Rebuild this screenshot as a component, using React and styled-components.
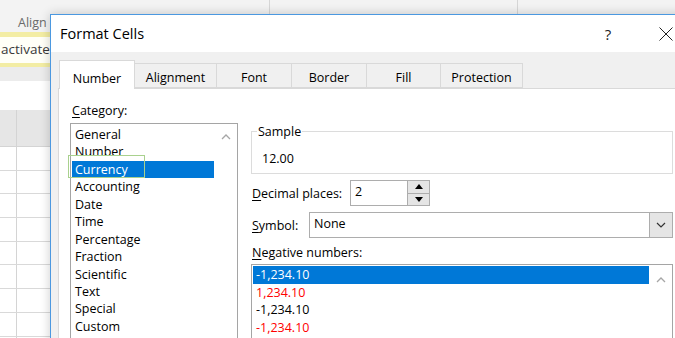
import styled, { createGlobalStyle } from 'styled-components';

const GlobalStyle = createGlobalStyle`
  html, body {
    margin: 0;
    padding: 0;
    background: #fff;
  }
  body {
    font-family: "Open Sans", "Noto Sans", sans-serif;
    font-size: 12.5px;
    color: #000;
  }
  * {
    box-sizing: border-box;
  }
`;

const tabs = [
  { label: 'Number', width: 76, active: true },
  { label: 'Alignment', width: 83 },
  { label: 'Font', width: 76 },
  { label: 'Border', width: 76 },
  { label: 'Fill', width: 75 },
  { label: 'Protection', width: 83 },
];

const categories = [
  'General', 'Number', 'Currency', 'Accounting', 'Date', 'Time',
  'Percentage', 'Fraction', 'Scientific', 'Text', 'Special', 'Custom',
];

const negatives = [
  { text: '-1,234.10', red: false },
  { text: '1,234.10', red: true },
  { text: '-1,234.10', red: false },
  { text: '-1,234.10', red: true },
];

const sheetRows = Array.from({ length: 9 });

const ChevronUp = () => (
  <svg width="10" height="7" viewBox="0 0 10 7">
    <polyline points="1,6 5,2 9,6" fill="none" stroke="#a6a6a6" strokeWidth="1.3" />
  </svg>
);

const ChevronDown = () => (
  <svg width="10" height="6" viewBox="0 0 10 6">
    <polyline points="1,1 5,5 9,1" fill="none" stroke="#333" strokeWidth="1.2" />
  </svg>
);

const CloseIcon = () => (
  <svg width="14" height="14" viewBox="0 0 14 14">
    <line x1="0.5" y1="0.5" x2="13.5" y2="13.5" stroke="#222" strokeWidth="1" />
    <line x1="13.5" y1="0.5" x2="0.5" y2="13.5" stroke="#222" strokeWidth="1" />
  </svg>
);

const Triangle = ({ down }) => (
  <svg width="8" height="5" viewBox="0 0 8 5">
    <polygon points={down ? '0,0 8,0 4,5' : '0,5 8,5 4,0'} fill="#000" />
  </svg>
);

const App = () => {
  return (
    <>
      <GlobalStyle />
      <Screen>
        <Sheet>
          <RibbonTop>
            <RibbonGroup $w={270} />
            <RibbonGroup $w={248} />
          </RibbonTop>
          <RibbonLabels>Align</RibbonLabels>
          <MessageBar>activate</MessageBar>
          <FormulaBand />
          <BlankBand />
          <HeaderBand>
            <RowHead />
          </HeaderBand>
          {sheetRows.map((_, i) => (
            <SheetRow key={i}>
              <RowHead />
            </SheetRow>
          ))}
        </Sheet>

        <Dialog>
          <TitleBar>
            <Title>Format Cells</Title>
            <TitleButtons>
              <TitleButton>?</TitleButton>
              <TitleButton>
                <CloseIcon />
              </TitleButton>
            </TitleButtons>
          </TitleBar>

          <Body>
            <TabStrip>
              {tabs.map(t => (
                <Tab key={t.label} $active={t.active} $w={t.width}>
                  {t.label}
                </Tab>
              ))}
            </TabStrip>

            <Panel>
              <Column>
                <FieldLabel>
                  <u>C</u>ategory:
                </FieldLabel>
                <CategoryList>
                  <Items $top={2}>
                    {categories.map(c => (
                      <Item key={c} $h={17.45} $selected={c === 'Currency'}>
                        {c}
                      </Item>
                    ))}
                  </Items>
                  <ScrollTrack $top={9}>
                    <ChevronUp />
                  </ScrollTrack>
                  <FocusMark />
                </CategoryList>
              </Column>

              <Column>
                <SampleBox>
                  <SampleLegend>Sample</SampleLegend>
                  <SampleValue>12.00</SampleValue>
                </SampleBox>

                <FormRow>
                  <FieldLabel $w={99}>
                    <u>D</u>ecimal places:
                  </FieldLabel>
                  <SpinInput>
                    <InputValue>2</InputValue>
                    <SpinButtons>
                      <SpinHalf>
                        <Triangle />
                      </SpinHalf>
                      <SpinHalf $lower>
                        <Triangle down />
                      </SpinHalf>
                    </SpinButtons>
                  </SpinInput>
                </FormRow>

                <FormRow>
                  <FieldLabel $w={58}>
                    <u>S</u>ymbol:
                  </FieldLabel>
                  <Select>
                    <InputValue>None</InputValue>
                    <DropButton>
                      <ChevronDown />
                    </DropButton>
                  </Select>
                </FormRow>

                <FieldLabel $gap={6}>
                  <u>N</u>egative numbers:
                </FieldLabel>
                <NegativeList>
                  <Items $top={1}>
                    {negatives.map((n, i) => (
                      <Item key={i} $h={17.7} $selected={i === 0} $red={n.red}>
                        {n.text}
                      </Item>
                    ))}
                  </Items>
                  <ScrollTrack $top={11}>
                    <ChevronUp />
                  </ScrollTrack>
                </NegativeList>
              </Column>
            </Panel>
          </Body>
        </Dialog>
      </Screen>
    </>
  );
};

const Screen = styled.div`
  position: relative;
  width: 675px;
  height: 338px;
  overflow: hidden;
  background: #fff;
`;

/* Excel window behind the dialog */
const Sheet = styled.div`
  display: flex;
  flex-direction: column;
  height: 100%;
`;

const RibbonTop = styled.div`
  display: flex;
  height: 14px;
  background: #f3f3f3;
  flex-shrink: 0;
`;

const RibbonGroup = styled.div`
  width: ${p => p.$w}px;
  border-right: 1px solid #d6d6d6;
`;

const RibbonLabels = styled.div`
  height: 18px;
  flex-shrink: 0;
  background: #f3f3f3;
  padding-left: 18px;
  line-height: 17px;
  font-size: 12.5px;
  color: #6a6a6a;
`;

const MessageBar = styled.div`
  height: 35px;
  flex-shrink: 0;
  background: #fffff7;
  border-top: 5px solid #f3eda3;
  border-bottom: 4px solid #f3eda3;
  padding-left: 1px;
  line-height: 25px;
  font-size: 13.5px;
  color: #3a3a3a;
`;

const FormulaBand = styled.div`
  height: 14px;
  flex-shrink: 0;
  background: #ececec;
`;

const BlankBand = styled.div`
  height: 29px;
  flex-shrink: 0;
  background: #fff;
`;

const HeaderBand = styled.div`
  height: 37px;
  flex-shrink: 0;
  display: flex;
  background: #e6e6e6;
  border-bottom: 1px solid #d4d4d4;
`;

const SheetRow = styled.div`
  height: 23.7px;
  flex-shrink: 0;
  display: flex;
  border-bottom: 1px solid #d9d9d9;
`;

const RowHead = styled.div`
  width: 17px;
  border-right: 1px solid #d4d4d4;
`;

/* Dialog window */
const Dialog = styled.div`
  position: absolute;
  left: 50px;
  top: 14px;
  width: 640px;
  height: 340px;
  display: flex;
  flex-direction: column;
  background: #f0f0f0;
  border: 1px solid #4b98e0;
  box-shadow: 0 0 10px rgba(0, 0, 0, 0.2);
`;

const TitleBar = styled.div`
  height: 37px;
  flex-shrink: 0;
  display: flex;
  align-items: center;
  justify-content: space-between;
  padding-left: 9px;
  background: #fff;
`;

const Title = styled.div`
  font-size: 14.5px;
  color: #000;
`;

const TitleButtons = styled.div`
  display: flex;
  gap: 12px;
  align-self: stretch;
`;

const TitleButton = styled.div`
  width: 46px;
  display: flex;
  align-items: center;
  justify-content: center;
  font-size: 15px;
  color: #222;
`;

const Body = styled.div`
  flex: 1;
  display: flex;
  flex-direction: column;
  padding: 8px 0 0 7px;
`;

const TabStrip = styled.div`
  position: relative;
  z-index: 1;
  display: flex;
  align-items: flex-start;
  height: 28px;
  padding-left: 1px;
`;

const Tab = styled.div`
  width: ${p => p.$w}px;
  height: ${p => (p.$active ? 29 : 25)}px;
  margin-top: ${p => (p.$active ? 0 : 3)}px;
  margin-left: -1px;
  display: flex;
  align-items: flex-end;
  justify-content: center;
  padding-bottom: ${p => (p.$active ? 2 : 1)}px;
  line-height: 17px;
  font-size: 12.5px;
  background: ${p => (p.$active ? '#fff' : '#f0f0f0')};
  border: 1px solid #d9d9d9;
  border-bottom: ${p => (p.$active ? 'none' : '1px solid #d9d9d9')};

  &:first-child {
    margin-left: 0;
  }
`;

const Panel = styled.div`
  flex: 1;
  display: grid;
  grid-template-columns: 167px 422px;
  column-gap: 13px;
  align-content: start;
  padding: 13px 0 0 12px;
  background: #fff;
  border: 1px solid #d9d9d9;
`;

const Column = styled.div`
  display: flex;
  flex-direction: column;
`;

const FieldLabel = styled.div`
  width: ${p => (p.$w ? `${p.$w}px` : 'auto')};
  flex-shrink: 0;
  margin-top: ${p => p.$gap || 0}px;
  padding-left: 1px;
  line-height: 17px;
  white-space: nowrap;

  u {
    text-decoration-thickness: 1px;
    text-underline-offset: 2px;
  }
`;

const CategoryList = styled.div`
  position: relative;
  display: flex;
  height: 240px;
  margin-top: 4px;
  margin-left: -1px;
  border: 1px solid #a5a5a5;
  background: #fff;
`;

const NegativeList = styled.div`
  display: flex;
  height: 90px;
  margin-top: 3px;
  border: 1px solid #a5a5a5;
  background: #fff;
`;

const Items = styled.div`
  flex: 1;
  padding: ${p => p.$top}px 1px 1px;
`;

const Item = styled.div`
  height: ${p => p.$h}px;
  line-height: 17px;
  padding-left: 3px;
  white-space: nowrap;
  color: ${p => (p.$selected ? '#fff' : p.$red ? '#ff0000' : '#000')};
  background: ${p => (p.$selected ? '#0078d7' : 'transparent')};
`;

const ScrollTrack = styled.div`
  width: 22px;
  display: flex;
  justify-content: center;
  padding-top: ${p => p.$top}px;
  background: #fff;
`;

const FocusMark = styled.div`
  position: absolute;
  left: -3px;
  top: 31px;
  width: 77px;
  height: 23px;
  border: 1px solid #a9d18e;
  pointer-events: none;
`;

const SampleBox = styled.fieldset`
  margin: 21px 0 0;
  min-width: 0;
  padding: 10px 10px 6px 5px;
  border: 1px solid #dcdcdc;
`;

const SampleLegend = styled.legend`
  padding: 0 1px;
  line-height: 17px;
`;

const SampleValue = styled.div`
  margin-left: 5px;
  line-height: 17px;
`;

const FormRow = styled.div`
  display: flex;
  align-items: center;
  margin-top: 6px;
`;

const SpinInput = styled.div`
  display: flex;
  width: 80px;
  height: 26px;
  border: 1px solid #adadad;
  background: #fff;
`;

const InputValue = styled.div`
  flex: 1;
  padding-left: 4px;
  line-height: 22px;
`;

const SpinButtons = styled.div`
  width: 22px;
  display: flex;
  flex-direction: column;
  border-left: 1px solid #adadad;
`;

const SpinHalf = styled.div`
  flex: 1;
  display: flex;
  align-items: center;
  justify-content: center;
  background: #e5e5e5;
  border-top: ${p => (p.$lower ? '1px solid #adadad' : 'none')};
`;

const Select = styled.div`
  display: flex;
  width: 364px;
  height: 26px;
  border: 1px solid #adadad;
  background: #fff;
`;

const DropButton = styled.div`
  width: 23px;
  display: flex;
  align-items: center;
  justify-content: center;
  background: #e5e5e5;
  border-left: 1px solid #adadad;
`;

export default App;
